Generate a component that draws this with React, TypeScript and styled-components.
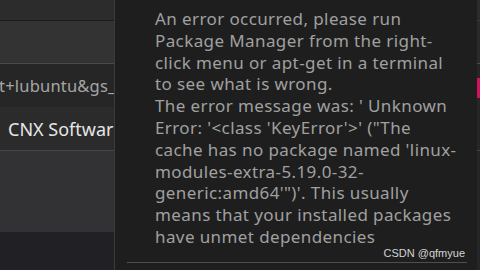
import React from "react";
import styled, { createGlobalStyle } from "styled-components";

const Global = createGlobalStyle`
  html, body { margin: 0; padding: 0; background: #1e1e1e; }
  #root { width: 480px; height: 270px; overflow: hidden; }
`;

const Page = styled.div`
  display: flex;
  width: 480px;
  height: 270px;
  overflow: hidden;
  font-family: "Noto Sans", "DejaVu Sans", sans-serif;
`;

const LeftPane = styled.div`
  width: 114px;
  flex: none;
  display: flex;
  flex-direction: column;
  overflow: hidden;
`;

const Band = styled.div<{ $h: number; $bg: string; $border?: string }>`
  height: ${(p) => p.$h}px;
  flex: none;
  background: ${(p) => p.$bg};
  border-bottom: ${(p) => (p.$border ? `1px solid ${p.$border}` : "none")};
  display: flex;
  align-items: center;
  overflow: hidden;
  white-space: nowrap;
`;

const FillBand = styled.div<{ $bg: string }>`
  flex: 1;
  background: ${(p) => p.$bg};
`;

const UrlText = styled.span`
  color: #a6a6a6;
  font-size: 16.5px;
  letter-spacing: 0.2px;
  margin-left: -1px;
`;

const TitleText = styled.span`
  color: #e6e6e6;
  font-size: 18px;
  margin-left: 8px;
`;

const Panel = styled.div`
  flex: 1;
  position: relative;
  background: #1e1e1e;
  border-left: 1px solid #3b3b3b;
  display: flex;
  flex-direction: column;
`;

const Message = styled.div`
  padding: 8px 0 0 40px;
  color: #a0a0a0;
  font-size: 17px;
  letter-spacing: 0.4px;
  line-height: 21.8px;
`;

const Line = styled.div`
  white-space: nowrap;
`;

const Divider = styled.div`
  margin: auto 10px 7px 12px;
  height: 1px;
  background: #4e4e4e;
`;

const Watermark = styled.div`
  position: absolute;
  right: 12px;
  bottom: 11px;
  font-family: "Liberation Sans", Arial, sans-serif;
  font-size: 11px;
  color: #d4d4d4;
`;

const RightStrip = styled.div`
  width: 3px;
  flex: none;
  display: flex;
  flex-direction: column;
  background: #252525;
`;

const StripSeg = styled.div<{ $h: number; $bg: string; $border?: string }>`
  height: ${(p) => p.$h}px;
  flex: none;
  background: ${(p) => p.$bg};
  border-bottom: ${(p) => (p.$border ? `1px solid ${p.$border}` : "none")};
`;

const lines = [
  "An error occurred, please run",
  "Package Manager from the right-",
  "click menu or apt-get in a terminal",
  "to see what is wrong.",
  "The error message was: ' Unknown",
  "Error: '<class 'KeyError'>' (\"The",
  "cache has no package named 'linux-",
  "modules-extra-5.19.0-32-",
  "generic:amd64'\")'. This usually",
  "means that your installed packages",
  "have unmet dependencies",
];

export default function App() {
  return (
    <>
      <Global />
      <Page>
        <LeftPane>
          <Band $h={20} $bg="#2c2c2c" $border="#1b1b1b" />
          <Band $h={42} $bg="#333333" $border="#4a4a4a" />
          <Band $h={43} $bg="#262626">
            <UrlText>t+lubuntu&amp;gs_</UrlText>
          </Band>
          <Band $h={43} $bg="#2b2b2b" $border="#454545">
            <TitleText>CNX Softwar</TitleText>
          </Band>
          <Band $h={81} $bg="#323235" />
          <FillBand $bg="#212125" />
        </LeftPane>
        <Panel>
          <Message>
            {lines.map((l, i) => (
              <Line key={i}>{l}</Line>
            ))}
          </Message>
          <Divider />
          <Watermark>CSDN @qfmyue</Watermark>
        </Panel>
        <RightStrip>
          <StripSeg $h={20} $bg="#2c2c2c" $border="#3a3a3a" />
          <StripSeg $h={42} $bg="#2a2a2a" $border="#4a4a4a" />
          <StripSeg $h={14} $bg="#262626" />
          <StripSeg $h={20} $bg="#d4105c" />
          <StripSeg $h={52} $bg="#262626" $border="#454545" />
          <FillBand $bg="#252525" />
        </RightStrip>
      </Page>
    </>
  );
}
